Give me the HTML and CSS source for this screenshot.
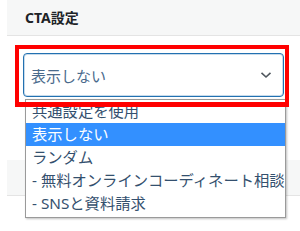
FILE: index.html
```html
<!DOCTYPE html>
<html lang="ja">
<head>
<meta charset="UTF-8" />
<meta name="viewport" content="width=device-width, initial-scale=1" />
<title>CTA設定</title>
<link rel="stylesheet" href="styles.css">
</head>
<body>
<div class="metabox">
  <div class="postbox-head">CTA設定</div>

  <div class="field">
    <div class="cta-box">
      <div class="select">
        <span class="select-value">表示しない</span>
        <svg class="chevron" width="12" height="8" viewBox="0 0 12 8">
          <path d="M1.5 1.8 L6 6 L10.5 1.8" fill="none" stroke="#50575e" stroke-width="1.6" />
        </svg>
      </div>
    </div>

    <ul class="dropdown">
      <li>共通設定を使用</li>
      <li class="selected">表示しない</li>
      <li>ランダム</li>
      <li>- 無料オンラインコーディネート相談</li>
      <li>- SNSと資料請求</li>
    </ul>
  </div>

  <div class="postbox-head next"></div>
</div>
</body>
</html>
```

FILE: styles.css
```css
html,
body {
  min-height: 100%;
}

body {
  margin: 0;
  min-height: 231px;
  background: #fff;
  font-family: "Noto Sans", "Noto Sans CJK JP", sans-serif;
  color: #1d2327;
}

.metabox {
  margin-left: 7px;
  padding-bottom: 40px;
}

.postbox-head {
  height: 35px;
  line-height: 35px;
  padding-left: 18px;
  background: #f6f7f7;
  border-bottom: 1px solid #e4e4e4;
  font-size: 14px;
  font-weight: bold;
}

.postbox-head.next {
  margin-top: 53px;
}

.field {
  position: relative;
  padding: 9px 11px 0 8px;
}

.cta-box {
  position: relative;
  z-index: 2;
  border: 4px solid #ff0000;
  border-bottom-width: 5px;
  padding: 4px 1px 5px 4px;
}

.select {
  display: flex;
  align-items: center;
  justify-content: space-between;
  height: 42px;
  padding: 0 11px 0 7px;
  background: #fff;
  border: 1px solid #2271b1;
  border-radius: 4px;
  box-shadow: inset 0 0 0 1px rgba(34, 113, 177, 0.25);
}

.select-value {
  font-size: 15px;
  color: #4a6a8c;
}

.chevron {
  display: block;
}

.dropdown {
  position: absolute;
  z-index: 1;
  top: 63px;
  left: 18px;
  width: 259px;
  margin: 0;
  padding: 0 0 2px;
  list-style: none;
  background: #fff;
  border: 1px solid #9a9a9a;
  box-shadow: 1px 1px 2px rgba(0, 0, 0, 0.25);
}

.dropdown li {
  height: 23px;
  line-height: 23px;
  padding-left: 6px;
  font-size: 15.3px;
  color: #34506e;
  white-space: nowrap;
  overflow: hidden;
}

.dropdown li.selected {
  background: #3390ff;
  color: #fff;
}
```
